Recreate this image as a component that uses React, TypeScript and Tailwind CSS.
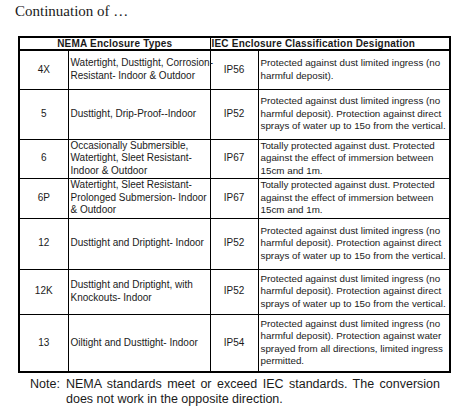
import React from "react";

type Row = {
  nema: string;
  type: string[];
  ip: string;
  desc: string[];
  h: number;
};

const rows: Row[] = [
  {
    nema: "4X",
    type: ["Watertight, Dusttight, Corrosion-", "Resistant- Indoor & Outdoor"],
    ip: "IP56",
    desc: ["Protected against dust limited ingress (no", "harmful deposit)."],
    h: 39,
  },
  {
    nema: "5",
    type: ["Dusttight, Drip-Proof--Indoor"],
    ip: "IP52",
    desc: [
      "Protected against dust limited ingress (no",
      "harmful deposit). Protection against direct",
      "sprays of water up to 15o from the vertical.",
    ],
    h: 50,
  },
  {
    nema: "6",
    type: ["Occasionally Submersible,", "Watertight, Sleet Resistant-", "Indoor & Outdoor"],
    ip: "IP67",
    desc: [
      "Totally protected against dust. Protected",
      "against the effect of immersion between",
      "15cm and 1m.",
    ],
    h: 39,
  },
  {
    nema: "6P",
    type: ["Watertight, Sleet Resistant-", "Prolonged Submersion- Indoor", "& Outdoor"],
    ip: "IP67",
    desc: [
      "Totally protected against dust. Protected",
      "against the effect of immersion between",
      "15cm and 1m.",
    ],
    h: 40,
  },
  {
    nema: "12",
    type: ["Dusttight and Driptight- Indoor"],
    ip: "IP52",
    desc: [
      "Protected against dust limited ingress (no",
      "harmful deposit). Protection against direct",
      "sprays of water up to 15o from the vertical.",
    ],
    h: 51,
  },
  {
    nema: "12K",
    type: ["Dusttight and Driptight, with", "Knockouts- Indoor"],
    ip: "IP52",
    desc: [
      "Protected against dust limited ingress (no",
      "harmful deposit). Protection against direct",
      "sprays of water up to 15o from the vertical.",
    ],
    h: 45,
  },
  {
    nema: "13",
    type: ["Oiltight and Dusttight- Indoor"],
    ip: "IP54",
    desc: [
      "Protected against dust limited ingress (no",
      "harmful deposit). Protection against water",
      "sprayed from all directions, limited ingress",
      "permitted.",
    ],
    h: 58,
  },
];

function Lines({ lines }: { lines: string[] }) {
  return (
    <>
      {lines.map((l, i) => (
        <div key={i} className="whitespace-nowrap">{l}</div>
      ))}
    </>
  );
}

export default function App() {
  return (
    <div className="w-[474px] h-[413px] bg-white overflow-hidden text-[#1a1a1a]">
      <div className="pl-[15px] pt-[1px] h-[36px] text-[15px] leading-[20px] font-['Liberation_Serif',serif]">
        Continuation of …
      </div>

      <div className="pl-[18px]">
        <table className="w-[431px] border-collapse border-2 border-black table-fixed font-['Liberation_Sans',Arial,sans-serif] text-[10px] leading-[12.5px]">
          <colgroup>
            <col className="w-[49px]" />
            <col className="w-[142px]" />
            <col className="w-[48px]" />
            <col className="w-[192px]" />
          </colgroup>
          <thead>
            <tr className="h-[13px]">
              <th colSpan={2} className="border border-black border-b-2 p-0 text-center font-bold leading-[11px] tracking-[0.2px]">
                NEMA Enclosure Types
              </th>
              <th colSpan={2} className="border border-black border-b-2 p-0 pl-[1px] text-left font-bold leading-[11px] tracking-[0.2px]">
                IEC Enclosure Classification Designation
              </th>
            </tr>
          </thead>
          <tbody>
            {rows.map((r) => (
              <tr key={r.nema} style={{ height: r.h }}>
                <td className="border border-black p-0 text-center align-middle">{r.nema}</td>
                <td className="border border-black p-0 pl-[2px] align-middle">
                  <Lines lines={r.type} />
                </td>
                <td className="border border-black p-0 text-center align-middle">{r.ip}</td>
                <td className="border border-black p-0 pl-[2px] align-middle text-[9.8px]">
                  <Lines lines={r.desc} />
                </td>
              </tr>
            ))}
          </tbody>
        </table>
      </div>

      <div className="flex pl-[30px] pr-[34px] pt-[4px] font-['Liberation_Sans',Arial,sans-serif] text-[12.5px] leading-[15px]">
        <div className="w-[36px] shrink-0">Note:</div>
        <div className="flex-1 text-justify">
          NEMA standards meet or exceed IEC standards. The conversion does not work in the opposite direction.
        </div>
      </div>
    </div>
  );
}
